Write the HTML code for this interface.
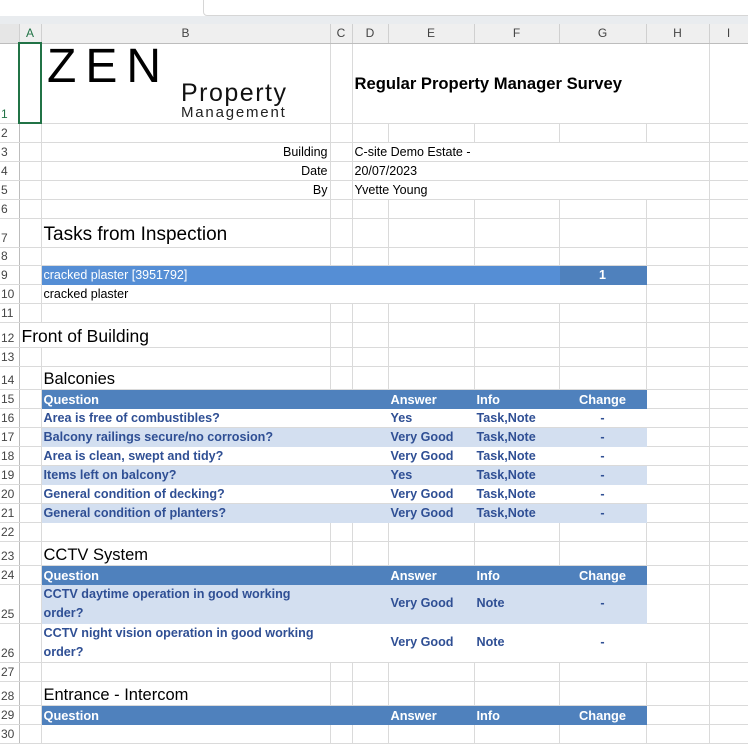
<!DOCTYPE html>
<html><head><meta charset="utf-8"><style>
*{margin:0;padding:0;box-sizing:border-box}
body{width:748px;height:725px;overflow:hidden;background:#fff;font-family:"Liberation Sans",sans-serif;position:relative}
#top{position:absolute;left:0;top:0;width:748px;height:16px;background:#fff}
#fbox{position:absolute;left:203px;top:-5px;width:560px;height:21px;border:1px solid #d6d6d6;border-radius:4px;background:#fff}
#strip{position:absolute;left:0;top:16px;width:748px;height:8px;background:#e9ecef}
table{position:absolute;left:0;top:24px;border-collapse:collapse;table-layout:fixed;width:748px}
td{border-right:1px solid #dadada;border-bottom:1px solid #dadada;padding:0 2px;white-space:nowrap;overflow:visible;font-size:12.5px;color:#000;vertical-align:bottom;line-height:17px}
tr.h td{background:#efefef;text-align:center;color:#444;font-size:12px;border-bottom:1px solid #bdbdbd;border-right:1px solid #d0d0d0;vertical-align:middle}
td.r{color:#444;font-size:12px;padding-left:1px;border-right:1px solid #bdbdbd;background:#fff}
.bh td.c{background:#4f81bd;color:#fff;font-weight:bold;border-color:#4f81bd;font-size:12.8px}
.q{color:#2f4f94;font-weight:bold;font-size:12.6px}
.l td.q{background:#d3dff0;border-color:#d3dff0}
.w td.q{border-right-color:#fff}
.ctr{text-align:center}
</style></head><body>
<div id="top"><div id="fbox"></div></div>
<div id="strip"></div>
<table>
<colgroup><col style="width:19px"><col style="width:22px"><col style="width:289px"><col style="width:22px"><col style="width:36px"><col style="width:86px"><col style="width:85px"><col style="width:87px"><col style="width:63px"><col style="width:39px"></colgroup>
<tr class="h" style="height:19px"><td style="background:#e6e6e6"></td><td style="color:#217346;border-bottom:2px solid #217346">A</td><td>B</td><td>C</td><td>D</td><td>E</td><td>F</td><td>G</td><td>H</td><td>I</td></tr>
<tr style="height:80px"><td class="r" style="color:#217346">1</td><td style="border:2px solid #217346;border-top-width:1px"></td><td style="position:relative;vertical-align:top"><div style="position:absolute;left:5px;top:-2px;font-size:48px;line-height:50px;letter-spacing:9px;font-weight:300">ZEN</div><div style="position:absolute;left:139px;top:37px;font-size:25px;line-height:25px;letter-spacing:1.5px;color:#111">Property</div><div style="position:absolute;left:139px;top:61px;font-size:15px;line-height:15px;letter-spacing:1.8px;color:#222">Management</div></td><td></td><td colspan="5" style="font-weight:bold;font-size:16.6px;vertical-align:middle">Regular Property Manager Survey</td><td></td></tr>
<tr style="height:19px"><td class="r">2</td><td></td><td></td><td></td><td></td><td></td><td></td><td></td><td></td><td></td></tr>
<tr style="height:19px"><td class="r">3</td><td></td><td style="text-align:right">Building</td><td></td><td colspan="5">C-site Demo Estate -</td><td></td></tr>
<tr style="height:19px"><td class="r">4</td><td></td><td style="text-align:right">Date</td><td></td><td colspan="5">20/07/2023</td><td></td></tr>
<tr style="height:19px"><td class="r">5</td><td></td><td style="text-align:right">By</td><td></td><td colspan="5">Yvette Young</td><td></td></tr>
<tr style="height:19px"><td class="r">6</td><td></td><td></td><td></td><td></td><td></td><td></td><td></td><td></td><td></td></tr>
<tr style="height:29px"><td class="r">7</td><td></td><td style="font-size:19px;line-height:24px">Tasks from Inspection</td><td></td><td></td><td></td><td></td><td></td><td></td><td></td></tr>
<tr style="height:18px"><td class="r">8</td><td></td><td></td><td></td><td></td><td></td><td></td><td></td><td></td><td></td></tr>
<tr style="height:19px"><td class="r">9</td><td></td><td colspan="5" style="background:#558ed5;color:#fff;border-color:#558ed5">cracked plaster [3951792]</td><td style="background:#4f81bd;color:#fff;font-weight:bold;text-align:center;border-color:#4f81bd">1</td><td></td><td></td></tr>
<tr style="height:19px"><td class="r">10</td><td></td><td colspan="6">cracked plaster</td><td></td><td></td></tr>
<tr style="height:19px"><td class="r">11</td><td></td><td></td><td></td><td></td><td></td><td></td><td></td><td></td><td></td></tr>
<tr style="height:25px"><td class="r">12</td><td colspan="2" style="font-size:17.5px;line-height:22px">Front of Building</td><td></td><td></td><td></td><td></td><td></td><td></td><td></td></tr>
<tr style="height:19px"><td class="r">13</td><td></td><td></td><td></td><td></td><td></td><td></td><td></td><td></td><td></td></tr>
<tr style="height:23px"><td class="r">14</td><td></td><td style="font-size:16.5px;line-height:20px">Balconies</td><td></td><td></td><td></td><td></td><td></td><td></td><td></td></tr>
<tr class="bh" style="height:19px"><td class="r">15</td><td></td><td class="c" colspan="3">Question</td><td class="c">Answer</td><td class="c">Info</td><td class="c ctr">Change</td><td></td><td></td></tr>
<tr class="w" style="height:19px"><td class="r">16</td><td></td><td class="q" colspan="3">Area is free of combustibles?</td><td class="q">Yes</td><td class="q">Task,Note</td><td class="q ctr">-</td><td></td><td></td></tr>
<tr class="l" style="height:19px"><td class="r">17</td><td></td><td class="q" colspan="3">Balcony railings secure/no corrosion?</td><td class="q">Very Good</td><td class="q">Task,Note</td><td class="q ctr">-</td><td></td><td></td></tr>
<tr class="w" style="height:19px"><td class="r">18</td><td></td><td class="q" colspan="3">Area is clean, swept and tidy?</td><td class="q">Very Good</td><td class="q">Task,Note</td><td class="q ctr">-</td><td></td><td></td></tr>
<tr class="l" style="height:19px"><td class="r">19</td><td></td><td class="q" colspan="3">Items left on balcony?</td><td class="q">Yes</td><td class="q">Task,Note</td><td class="q ctr">-</td><td></td><td></td></tr>
<tr class="w" style="height:19px"><td class="r">20</td><td></td><td class="q" colspan="3">General condition of decking?</td><td class="q">Very Good</td><td class="q">Task,Note</td><td class="q ctr">-</td><td></td><td></td></tr>
<tr class="l" style="height:19px"><td class="r">21</td><td></td><td class="q" colspan="3">General condition of planters?</td><td class="q">Very Good</td><td class="q">Task,Note</td><td class="q ctr">-</td><td></td><td></td></tr>
<tr style="height:19px"><td class="r">22</td><td></td><td></td><td></td><td></td><td></td><td></td><td></td><td></td><td></td></tr>
<tr style="height:24px"><td class="r">23</td><td></td><td style="font-size:16.5px;line-height:20px">CCTV System</td><td></td><td></td><td></td><td></td><td></td><td></td><td></td></tr>
<tr class="bh" style="height:19px"><td class="r">24</td><td></td><td class="c" colspan="3">Question</td><td class="c">Answer</td><td class="c">Info</td><td class="c ctr">Change</td><td></td><td></td></tr>
<tr class="l" style="height:37px"><td class="r">25</td><td></td><td class="q" colspan="3" style="line-height:19px">CCTV daytime operation in good working<br>order?</td><td class="q" style="vertical-align:middle">Very Good</td><td class="q" style="vertical-align:middle">Note</td><td class="q ctr" style="vertical-align:middle">-</td><td></td><td></td></tr>
<tr class="w" style="height:37px"><td class="r">26</td><td></td><td class="q" colspan="3" style="line-height:19px">CCTV night vision operation in good working<br>order?</td><td class="q" style="vertical-align:middle">Very Good</td><td class="q" style="vertical-align:middle">Note</td><td class="q ctr" style="vertical-align:middle">-</td><td></td><td></td></tr>
<tr style="height:19px"><td class="r">27</td><td></td><td></td><td></td><td></td><td></td><td></td><td></td><td></td><td></td></tr>
<tr style="height:24px"><td class="r">28</td><td></td><td style="font-size:16.5px;line-height:20px">Entrance - Intercom</td><td></td><td></td><td></td><td></td><td></td><td></td><td></td></tr>
<tr class="bh" style="height:19px"><td class="r">29</td><td></td><td class="c" colspan="3">Question</td><td class="c">Answer</td><td class="c">Info</td><td class="c ctr">Change</td><td></td><td></td></tr>
<tr style="height:19px"><td class="r">30</td><td></td><td></td><td></td><td></td><td></td><td></td><td></td><td></td><td></td></tr>
</table>
</body></html>
